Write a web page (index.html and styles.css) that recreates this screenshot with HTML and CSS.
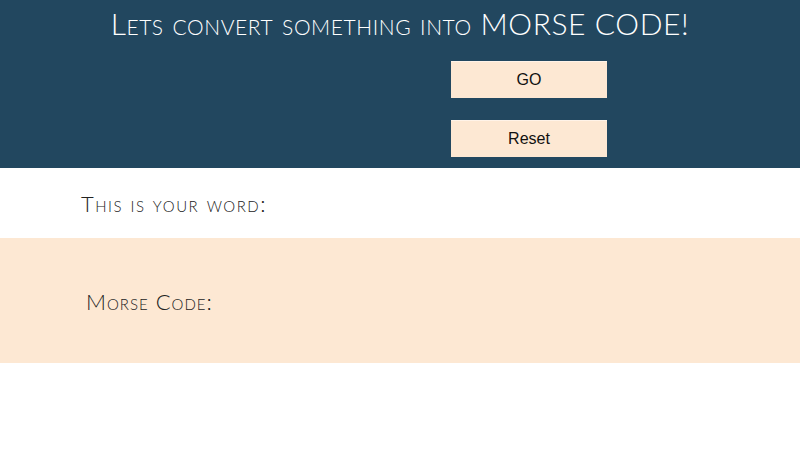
FILE: index.html
```html
<!DOCTYPE html>
<html>
	<head>
		<meta charset="UTF-8">
		<title>Morse Code</title>
		<link rel="stylesheet" href="styles.css">
	</head>
	<body>
		<!--头部-->
		<div class="top">
			<h1>Lets convert something into MORSE CODE!</h1>
			<div class="btns">
				<button class="btn">GO</button>
				<button class="btn">Reset</button>
			</div>
		</div>
		<!--输入的单词-->
		<div class="word">
			<p>This is your word:</p>
		</div>
		<!--摩斯码-->
		<div class="morse">
			<p>Morse Code:</p>
		</div>
	</body>
</html>
```

FILE: styles.css
```css
*{
	margin: 0;
	padding: 0;
	box-sizing: border-box;
}
body{
	font-family: Lato, "Liberation Sans", sans-serif;
	background: #fff;
}
.top{
	height: 168px;
	background: #22475f;
	padding-top: 6px;
}
.top h1{
	font-size: 30px;
	font-weight: 300;
	font-variant: small-caps;
	letter-spacing: 0.6px;
	color: #fff;
	text-align: center;
	line-height: 34px;
}
.btns{
	display: flex;
	flex-direction: column;
	gap: 22px;
	padding-left: 451px;
	margin-top: 21px;
}
.btn{
	width: 156px;
	height: 37px;
	background: #fde8d3;
	border: none;
	border-top: 1px solid #fff3e8;
	font-family: "Liberation Sans", Arial, sans-serif;
	font-size: 16px;
	color: #111;
	cursor: pointer;
}
.word{
	height: 70px;
	padding: 22px 0 0 81px;
}
.word p,.morse p{
	font-size: 22px;
	font-weight: 300;
	font-variant: small-caps;
	letter-spacing: 1.5px;
	color: #222;
}
.morse{
	height: 125px;
	background: #fde8d3;
	padding: 50px 0 0 86px;
}
.morse p{
	letter-spacing: 1px;
}
```
